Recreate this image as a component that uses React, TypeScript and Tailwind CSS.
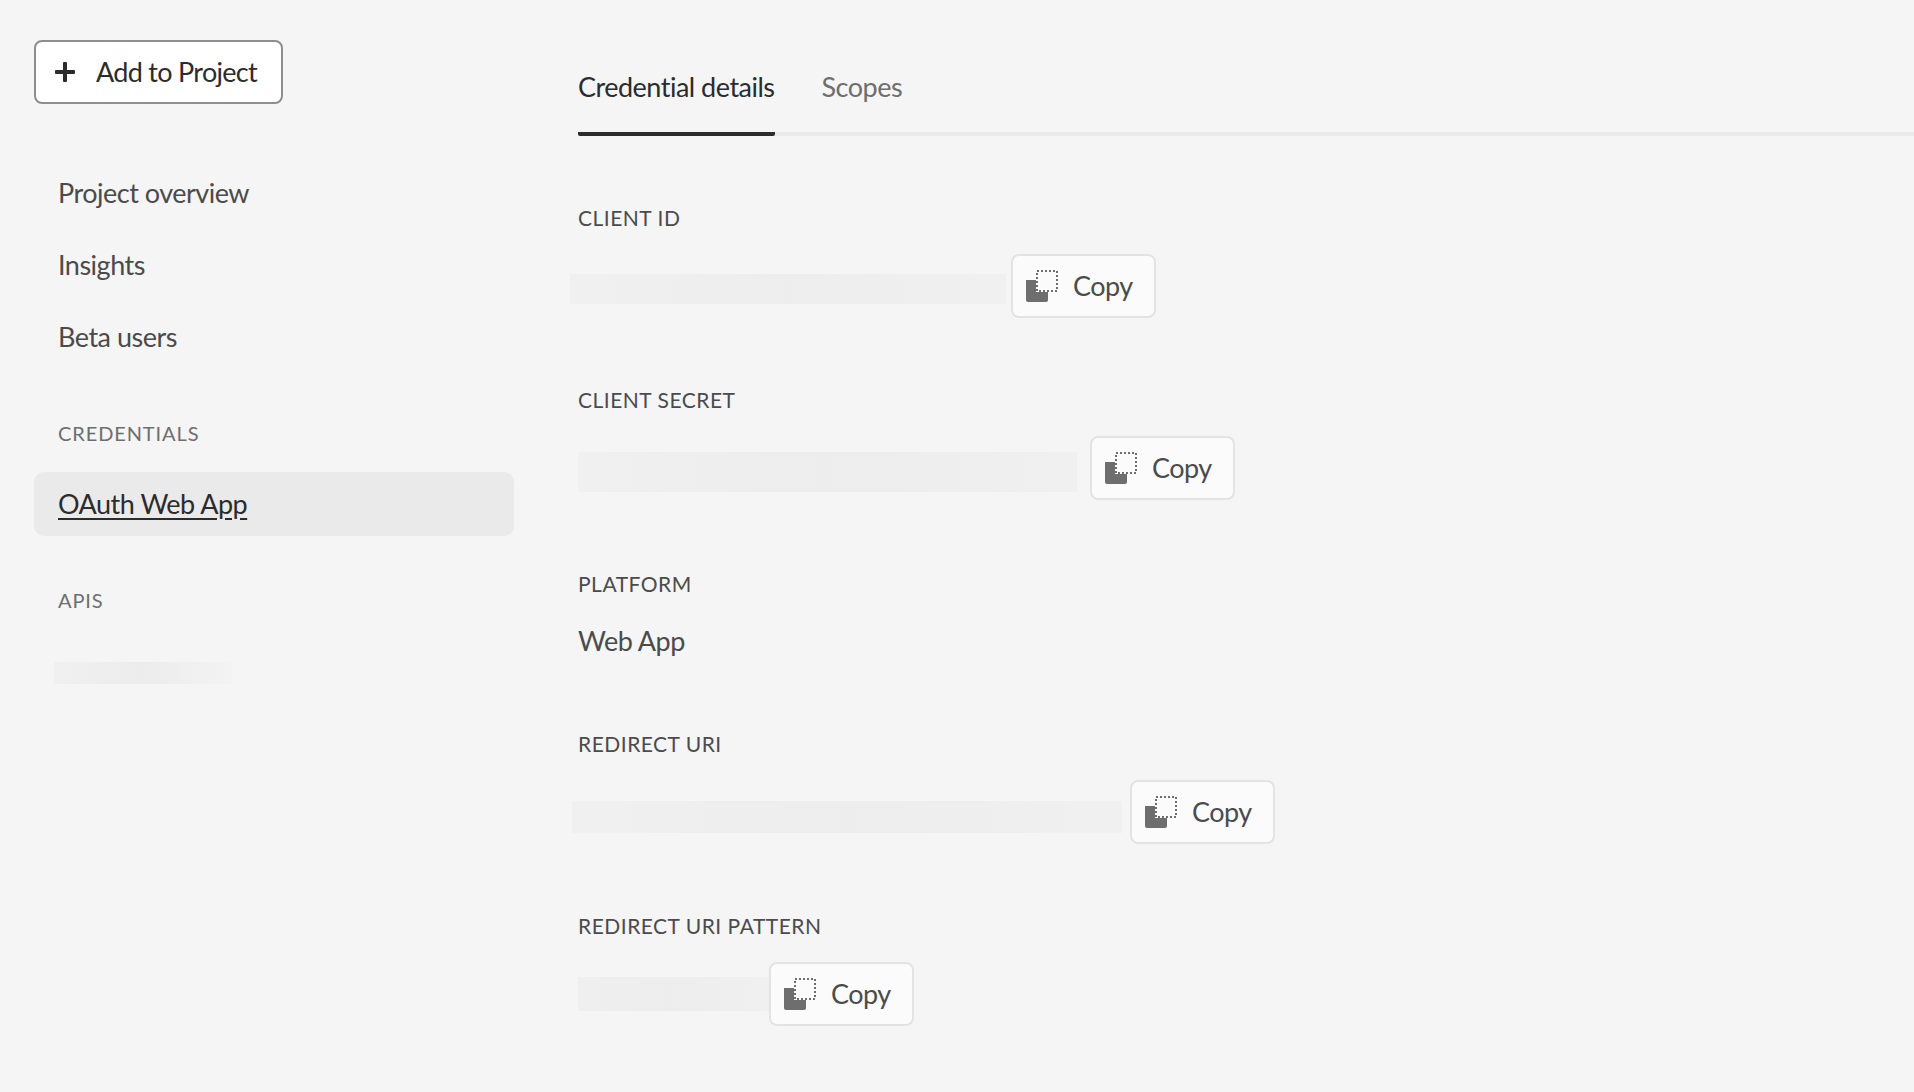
const font = "font-['Lato','Liberation_Sans',sans-serif]";

function CopyIcon() {
  return (
    <svg width="32" height="32" viewBox="0 0 32 32" className="shrink-0">
      <path d="M0 10h10v12h12v8a2 2 0 0 1-2 2H2a2 2 0 0 1-2-2z" fill="#6e6e6e" />
      <rect x="11" y="1" width="20" height="20" fill="none" stroke="#6e6e6e" strokeWidth="2" strokeDasharray="2 2" />
    </svg>
  );
}

function PlusIcon() {
  return (
    <svg width="20" height="20" viewBox="0 0 20 20" className="shrink-0">
      <path d="M8 1a1 1 0 0 1 1-1h2a1 1 0 0 1 1 1v7h7a1 1 0 0 1 1 1v2a1 1 0 0 1-1 1h-7v7a1 1 0 0 1-1 1H9a1 1 0 0 1-1-1v-7H1a1 1 0 0 1-1-1V9a1 1 0 0 1 1-1h7z" fill="#2c2c2c" />
    </svg>
  );
}

function CopyButton() {
  return (
    <button className="flex h-[64px] w-[145px] shrink-0 items-center rounded-[8px] border-2 border-[#e3e3e3] bg-[#fbfbfb] pl-[13px] text-[27px] tracking-[-0.5px] text-[#4b4b4b]">
      <CopyIcon />
      <span className="ml-[15px]">Copy</span>
    </button>
  );
}

function Label({ children, className }: { children: string; className: string }) {
  return (
    <div className={`h-[32px] text-[21px] leading-[32px] tracking-[0.5px] text-[#4b4b4b] ${className}`}>
      {children}
    </div>
  );
}

function NavItem({ children }: { children: string }) {
  return <div className="mb-[8px] h-[64px] pl-[24px] text-[27px] leading-[64px] tracking-[-0.5px] text-[#4b4b4b]">{children}</div>;
}

export default function App() {
  return (
    <div className={`flex h-[1092px] w-[1914px] overflow-hidden bg-[#f5f5f5] ${font}`}>
      {/* sidebar */}
      <aside className="w-[578px] shrink-0 pl-[34px] pr-[64px] pt-[40px]">
        <button className="flex h-[64px] w-[249px] items-center rounded-[8px] border-2 border-[#8e8e8e] bg-white pl-[19px] text-[27px] tracking-[-0.7px] text-[#2c2c2c]">
          <PlusIcon />
          <span className="ml-[21px]">Add to Project</span>
        </button>
        <nav className="mt-[57px]">
          <NavItem>Project overview</NavItem>
          <NavItem>Insights</NavItem>
          <NavItem>Beta users</NavItem>
        </nav>
        <div className="mt-[48px] h-[32px] pl-[24px] text-[20px] leading-[32px] tracking-[0.9px] text-[#6e6e6e]">CREDENTIALS</div>
        <div className="mt-[23px] h-[64px] rounded-[10px] bg-[#eaeaea] pl-[24px] text-[27px] leading-[64px] tracking-[-0.5px] text-[#2c2c2c] underline underline-offset-[4px]">
          OAuth Web App
        </div>
        <div className="mt-[48px] h-[32px] pl-[24px] text-[20px] leading-[32px] tracking-[0.9px] text-[#6e6e6e]">APIS</div>
        <div className="ml-[20px] mt-[46px] h-[22px] w-[178px] bg-gradient-to-r from-[#f0f0f0] via-[#ececec] to-[#f3f3f3]" />
      </aside>

      {/* main */}
      <main className="min-w-0 flex-1">
        <div className="mt-[56px] flex h-[80px] gap-[47px] border-b-4 border-[#eaeaea]">
          <div className="-mb-[4px] h-[80px] rounded-b-[2px] border-b-4 border-[#2c2c2c] text-[27px] leading-[61px] tracking-[-0.5px] text-[#2c2c2c]">
            Credential details
          </div>
          <div className="h-[80px] text-[27px] leading-[61px] tracking-[-0.5px] text-[#6e6e6e]">Scopes</div>
        </div>

        <Label className="mt-[66px]">CLIENT ID</Label>
        <div className="mt-[20px] flex items-start">
          <div className="-ml-[8px] mr-[5px] mt-[20px] h-[30px] w-[436px] bg-gradient-to-r from-[#f0f0f0] via-[#ededed] to-[#f0f0f0]" />
          <CopyButton />
        </div>

        <Label className="mt-[66px]">CLIENT SECRET</Label>
        <div className="mt-[20px] flex items-start">
          <div className="mr-[13px] mt-[16px] h-[40px] w-[499px] bg-gradient-to-r from-[#f0f0f0] via-[#ededed] to-[#f0f0f0]" />
          <CopyButton />
        </div>

        <Label className="mt-[68px]">PLATFORM</Label>
        <div className="mt-[9px] h-[64px] text-[27px] leading-[64px] tracking-[-0.5px] text-[#4b4b4b]">Web App</div>

        <Label className="mt-[55px]">REDIRECT URI</Label>
        <div className="mt-[20px] flex items-start">
          <div className="-ml-[6px] mr-[8px] mt-[21px] h-[32px] w-[550px] bg-gradient-to-r from-[#f0f0f0] via-[#ededed] to-[#f0f0f0]" />
          <CopyButton />
        </div>

        <Label className="mt-[66px]">REDIRECT URI PATTERN</Label>
        <div className="mt-[20px] flex items-start">
          <div className="mt-[15px] h-[34px] w-[191px] bg-gradient-to-r from-[#efefef] via-[#ededed] to-[#f0f0f0]" />
          <CopyButton />
        </div>
      </main>
    </div>
  );
}
